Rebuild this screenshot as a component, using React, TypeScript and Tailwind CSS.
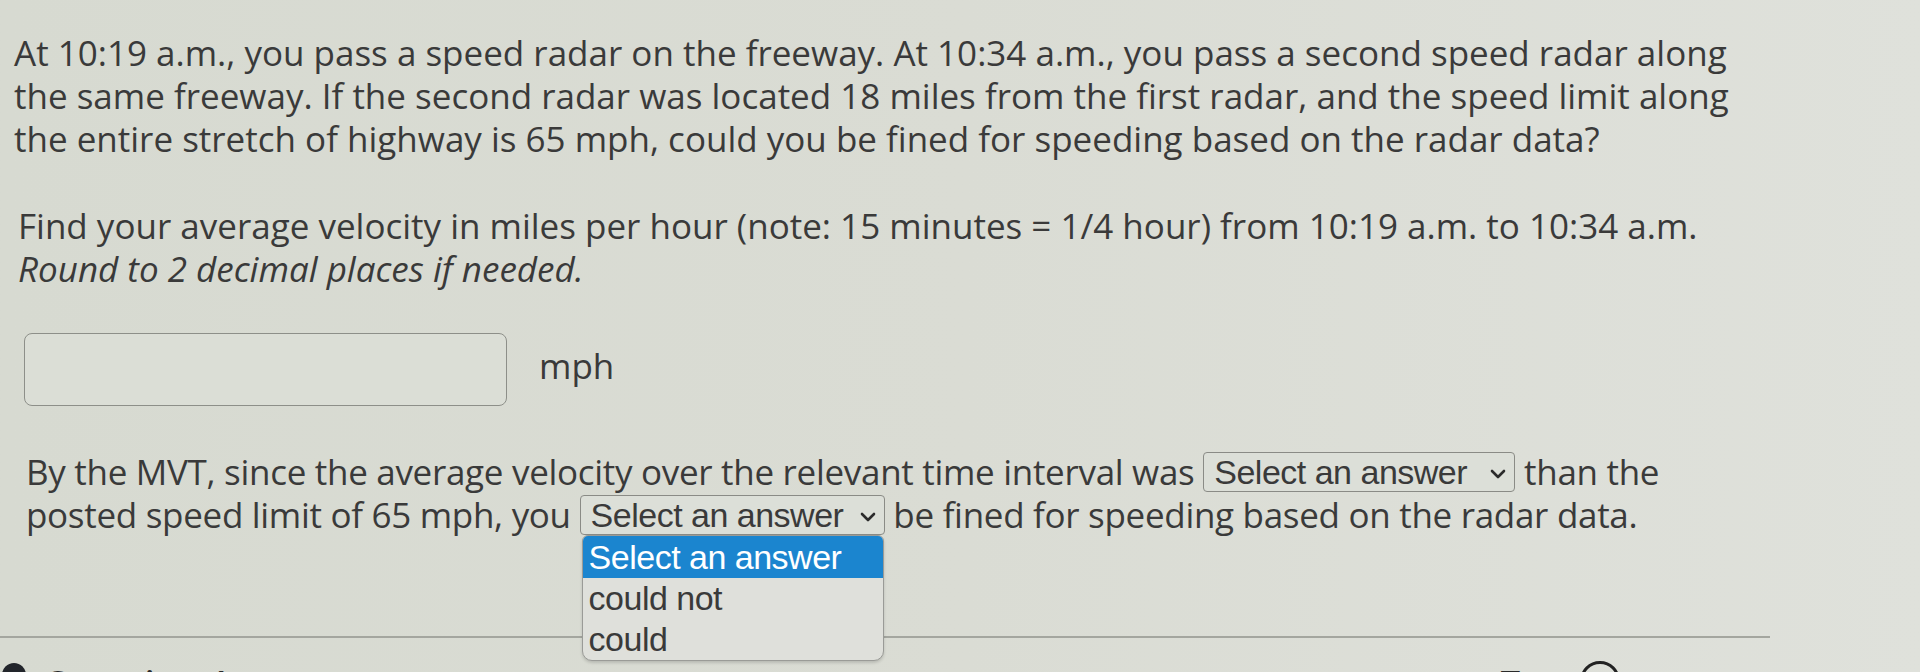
import React from 'react';

const bodyFont = { fontFamily: '"Open Sans", "Noto Sans", sans-serif' };

function Chevron() {
  return (
    <svg className="w-[16px] h-[10px] ml-[6px] mt-[4px]" viewBox="0 0 16 10" fill="none">
      <path d="M2 2 L8 8 L14 2" stroke="#2b2b2b" strokeWidth="2.6" strokeLinecap="round" strokeLinejoin="round" />
    </svg>
  );
}

function FakeSelect({ width, open }: { width: string; open?: boolean }) {
  return (
    <span className={`relative inline-flex items-center align-middle ${width} h-[40px] border border-[#8a8b86] rounded-[4px] bg-[#dcdfd8] pl-[10px] pr-[8px] font-['Liberation_Sans',Arial,sans-serif] text-[34px] leading-none text-[#3a3a3a] tracking-[-0.5px]`}>
      <span className="flex-1 whitespace-nowrap">Select an answer</span>
      <Chevron />
      {open && (
        <span className="absolute left-[1px] top-[39px] w-[302px] flex flex-col bg-[#dfe0db] border border-[#9a9b97] rounded-b-[10px] rounded-t-[6px] overflow-hidden shadow-[0_2px_3px_rgba(0,0,0,0.15)] z-10">
          <span className="h-[42px] flex items-center pl-[6px] bg-[#1b85cf] text-white whitespace-nowrap">Select an answer</span>
          <span className="h-[40px] flex items-center pl-[6px] text-[#3a3a3a] whitespace-nowrap">could not</span>
          <span className="h-[42px] flex items-center pl-[6px] text-[#3a3a3a] whitespace-nowrap">could</span>
        </span>
      )}
    </span>
  );
}

export default function App() {
  return (
    <div className="w-[1920px] h-[672px] overflow-hidden bg-gradient-to-r from-[#d7dad1] via-[#dadcd4] to-[#dfe1db] text-[#3a3a3a]" style={bodyFont}>
      <div className="pt-[31px] text-[35px] leading-[43px]">
        {/* Question text */}
        <p className="pl-[14px]">
          <span className="block whitespace-nowrap">At 10:19 a.m., you pass a speed radar on the freeway. At 10:34 a.m., you pass a second speed radar along</span>
          <span className="block whitespace-nowrap">the same freeway. If the second radar was located 18 miles from the first radar, and the speed limit along</span>
          <span className="block whitespace-nowrap">the entire stretch of highway is 65 mph, could you be fined for speeding based on the radar data?</span>
        </p>

        <p className="pl-[18px] mt-[44px]">
          <span className="block whitespace-nowrap">Find your average velocity in miles per hour (note: 15 minutes = 1/4 hour) from 10:19 a.m. to 10:34 a.m.</span>
          <span className="block whitespace-nowrap italic">Round to 2 decimal places if needed.</span>
        </p>

        {/* Answer input */}
        <div className="flex items-center mt-[43px] pl-[24px]">
          <div className="w-[483px] h-[73px] border border-[#8d8f89] rounded-[8px] bg-[#dbded6]" />
          <span className="ml-[32px] -mt-[8px]">mph</span>
        </div>

        {/* MVT sentence with dropdowns */}
        <p className="pl-[26px] mt-[44px] tracking-[-0.3px]">
          <span className="flex items-center whitespace-nowrap h-[43px]">
            By the MVT, since the average velocity over the relevant time interval was&nbsp;
            <FakeSelect width="w-[312px]" />
            &nbsp;than the
          </span>
          <span className="flex items-center whitespace-nowrap h-[43px]">
            posted speed limit of 65 mph, you&nbsp;
            <FakeSelect width="w-[305px]" open />
            &nbsp;be fined for speeding based on the radar data.
          </span>
        </p>

        <div className="mt-[100px] w-[1770px] border-t-2 border-[#a4a69f]" />

        {/* Next question header, mostly cut off below the fold */}
        <div className="flex items-start mt-[23px] pl-[2px]">
          <span className="w-[24px] h-[24px] rounded-full bg-[#22252b] mt-[2px]" />
          <span className="ml-[18px] text-[#2a2a2a] font-semibold">Question 4</span>
          <span className="ml-auto mr-[300px] flex items-start gap-[60px]">
            <span className="text-[#2a2a2a]">T</span>
            <span className="w-[40px] h-[40px] rounded-full border-[3px] border-[#222]" />
          </span>
        </div>
      </div>
    </div>
  );
}
